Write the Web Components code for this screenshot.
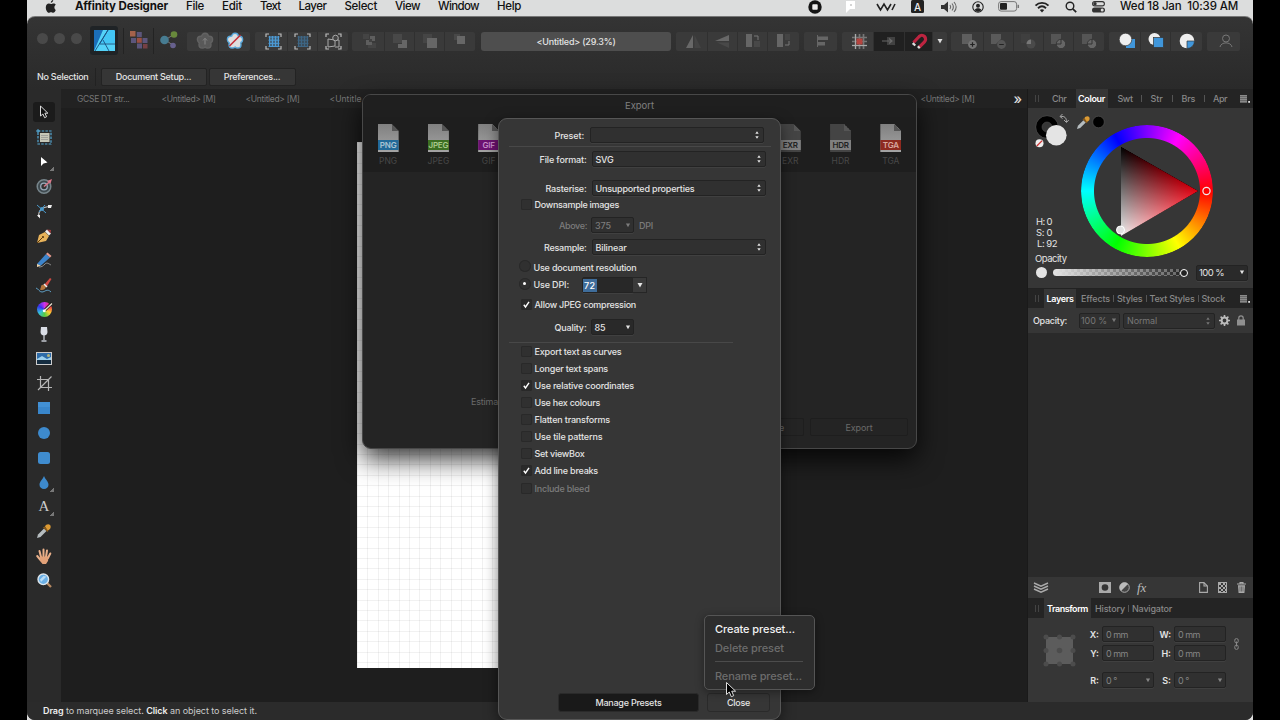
<!DOCTYPE html>
<html lang="en">
<head>
<meta charset="utf-8">
<title>Affinity Designer</title>
<style>
  body {
    margin: 0;
    width: 1280px;
    height: 720px;
    overflow: hidden;
    background: #000;
    font-family: Inter, "Liberation Sans", sans-serif;
    font-size: 9px;
    line-height: 1;
    color: #e4e4e4;
  }
</style>
</head>
<body>
<mac-desktop>
  <menu-bar slot="menu"></menu-bar>
  <app-window>
    <tool-bar slot="toolbar"></tool-bar>
    <context-bar slot="context"></context-bar>
    <tool-column slot="tools"></tool-column>
    <doc-area slot="document"></doc-area>
    <studio-panels slot="studio"></studio-panels>
    <status-bar slot="status"></status-bar>
  </app-window>
  <export-dialog slot="overlay"></export-dialog>
  <preset-sheet slot="overlay"></preset-sheet>
  <popup-menu slot="overlay">
    <ui-text w="80">Create preset...</ui-text>
    <ui-text w="69" class="off">Delete preset</ui-text>
    <hr>
    <ui-text w="87" class="off">Rename preset...</ui-text>
  </popup-menu>
  <mouse-pointer slot="overlay"></mouse-pointer>
</mac-desktop>

<script>
// name: [width, height, svg content]
const corners = '<path d="M1 4V1h3M13 1h3v3M16 13v3h-3M4 16H1v-3" fill="none" stroke="#bbb" stroke-width="1.2"/>';
const grid = c => `<rect x="4" y="3.500" width="10" height="10.500" fill="${c}" opacity=".45"/><path d="M4.500 3v11M7.500 3v11M10.500 3v11M13.500 3v11M3.500 4h11M3.500 7.200h11M3.500 10.400h11M3.500 13.500h11" stroke="${c}" stroke-width="1"/>`;
const flower = (f, s) => `<g fill="${f}" stroke="${s}" stroke-width="1.400"><circle cx="9" cy="4.500" r="3.300"/><circle cx="13.300" cy="7.600" r="3.300"/><circle cx="11.700" cy="12.700" r="3.300"/><circle cx="6.300" cy="12.700" r="3.300"/><circle cx="4.700" cy="7.600" r="3.300"/></g><circle cx="9" cy="9" r="5.500" fill="${f}"/>`;

const ICONS = {
  apple: [12, 14, '<path d="M8.200 0c.1 1.300-1 2.700-2.400 2.700C5.600 1.500 6.900.1 8.200 0zM10.800 9.900c-.6 1.400-1.500 2.800-2.600 2.800-.9 0-1.200-.5-2.200-.5s-1.400.5-2.200.5C2.300 12.700.8 9.900.8 7.400.8 5 2.300 3.600 3.900 3.600c.9 0 1.500.5 2.200.5.7 0 1.400-.6 2.500-.6.9 0 1.700.5 2.200 1.200-1.900 1.100-1.700 4.200 0 5.200z" fill="#222"/>'],
  record: [14, 14, '<circle cx="7" cy="7" r="6.700" fill="#151515"/><rect x="4.300" y="4.300" width="5.400" height="5.400" rx=".8" fill="#eee"/>'],
  flag: [12, 14, '<path d="M2 1h9v8H6l-4 4z" fill="#fff"/><rect x="6" y="4" width="2" height="2" fill="#d4d4d4"/>'],
  wave: [20, 10, '<path d="M1 2l3.500 6L8 2l3.500 6L15 2M16 8l3-6" fill="none" stroke="#222" stroke-width="1.600"/>'],
  inputA: [13, 13, '<rect width="13" height="13" rx="1.500" fill="#222"/>'],
  speaker: [16, 12, '<path d="M0 4h3l4-3.500v11L3 8H0z" fill="#333"/><path d="M9 4c1 1.300 1 2.700 0 4M11 2.500c1.800 2.300 1.800 4.700 0 7M13 1c2.600 3 2.600 7 0 10" fill="none" stroke="#666" stroke-width="1.100"/>'],
  user: [12, 12, '<circle cx="6" cy="6" r="5.200" fill="none" stroke="#222" stroke-width="1.100"/><circle cx="6" cy="4.700" r="2" fill="#222"/><path d="M2.600 9.200c1-2.600 5.800-2.600 6.800 0L6 11z" fill="#222"/>'],
  battery: [22, 11, '<rect x=".6" y=".6" width="18" height="9.500" rx="2.500" fill="none" stroke="#777"/><rect x="2" y="2" width="7" height="6.700" rx="1" fill="#222"/><path d="M20.300 3.800v3.200" stroke="#777" stroke-width="1.500"/>'],
  wifi: [16, 12, '<path d="M1.500 4.600c3.700-3.600 9.300-3.600 13 0M4 7.200c2.400-2.200 5.600-2.200 8 0" fill="none" stroke="#222" stroke-width="1.900"/><path d="M5.800 9c1.400-1.100 3-1.100 4.400 0L8 11.500z" fill="#222"/>'],
  search: [12, 12, '<circle cx="5" cy="5" r="3.800" fill="none" stroke="#222" stroke-width="1.400"/><path d="M7.800 7.800l3.400 3.400" stroke="#222" stroke-width="1.700"/>'],
  control: [13, 12, '<rect x=".6" y=".6" width="11.800" height="4.300" rx="2.150" fill="none" stroke="#333" stroke-width="1.100"/><circle cx="3" cy="2.700" r="1.700" fill="#333"/><rect y="6.400" width="13" height="5.200" rx="2.600" fill="#333"/><circle cx="10.200" cy="9" r="1.500" fill="#ddd"/>'],

  designer: [21, 21, '<rect width="21" height="21" rx="1" fill="#43c6f5"/><path d="M0 0h14L0 21z" fill="#1b6fba"/><path d="M9 0h5L6 13h15v8H0z" fill="#54d2f8"/><path d="M14 0L5.500 14H21M9 10l6 11M14 0L1 21" fill="none" stroke="#1a4f80" stroke-width=".9"/>'],
  pixel: [18, 18, '<rect width="5.500" height="5.500" fill="#a5624b"/><g fill="#5c567c"><rect x="6.800" y="1" width="5" height="5"/><rect x="1" y="7" width="5" height="5"/><rect x="12.500" y="7" width="5" height="5"/><rect x="7" y="12.500" width="5" height="5"/></g><rect x="6.800" y="6.800" width="5" height="5" fill="#9b5044"/><rect x="13" y="13" width="4.500" height="4.500" fill="#754044"/>'],
  share: [18, 18, '<path d="M5 9l8-5M5 9l8 5" stroke="#777"/><circle cx="4.500" cy="9" r="4.300" fill="#477c92"/><circle cx="14" cy="3.500" r="3.300" fill="#68893c"/><circle cx="13" cy="14.500" r="2.800" fill="#66608d"/>'],
  flowerUp: [18, 18, flower('#595959', '#626262') + '<path d="M9 12.500V7M7 8.500l2-2.300 2 2.300" stroke="#888" fill="none"/>'],
  flowerOff: [18, 18, flower('#dedede', '#58a8dc') + '<path d="M3.500 14L14.500 3" stroke="#c3303a" stroke-width="1.600"/>'],
  snapA: [17, 17, corners + grid('#4c9ad4')],
  snapB: [17, 17, corners + grid('#3e6685')],
  snapC: [17, 17, corners + '<path d="M3 6l7 1v6l-7 1zM10 7h4v7h-4" fill="none" stroke="#aaa"/><circle cx="10.500" cy="5" r="2.800" fill="#444" stroke="#aaa"/>'],
  boolA: [14, 14, '<path d="M0 0h6v5H0zM5 9h8v5H5z" fill="#444"/><path d="M7 2h5v5H9v4H3V6h4z" fill="#5e5e5e"/><rect x="6" y="5" width="3" height="3" fill="#414141"/>'],
  boolB: [14, 14, '<rect width="9" height="9" fill="#484848"/><path d="M9 6h5v8H5v-4h4z" fill="#666"/>'],
  boolC: [14, 14, '<rect width="9" height="9" fill="#454545"/><rect x="4" y="4" width="10" height="10" fill="#666"/>'],
  boolD: [14, 14, '<rect x="1" width="6" height="6" fill="#484848"/><rect x="4" y="2" width="8" height="8" fill="#676767"/>'],
  flipH: [15, 13, '<path d="M7 0v13H0z" fill="#686868"/><path d="M8.500 0v13H15z" fill="#444"/>'],
  flipV: [15, 13, '<path d="M14 0v6H0z" fill="#686868"/><path d="M14 7.500V13L2 7.500z" fill="#484848"/>'],
  rotL: [14, 14, '<rect width="6" height="13" fill="#666"/><rect x="8" y="7" width="6" height="6" fill="#484848"/><path d="M8 2h4v4" fill="none" stroke="#777"/>'],
  rotR: [14, 14, '<rect width="6" height="13" fill="#666"/><rect x="8" width="5" height="6" fill="#444"/><path d="M12 7v4H8" fill="none" stroke="#777"/>'],
  align: [12, 12, '<rect x="1" y="1.500" width="10" height="3.500" fill="#666"/><rect x="1" y="7" width="7" height="3.500" fill="#666"/><path d="M.5 0v12" stroke="#666"/>'],
  pixGrid: [15, 15, '<path d="M3.500 0v15M7.500 0v15M11.500 0v15M0 3.500h15M0 7.500h15M0 11.500h15" stroke="#777" stroke-width="1.700"/><rect x="4.500" y="4.500" width="6" height="6" fill="#b6443f"/><path d="M3.500 0v15M0 11.500h15" stroke="#aaa"/>'],
  nudge: [14, 10, '<rect x="5" y="1" width="8" height="8" fill="#414141"/><path d="M0 5h10M7 2.500L10 5 7 7.500" fill="none" stroke="#696969" stroke-width="1.200"/>'],
  magnet: [16, 16, '<path d="M2.500 9.500l5.700-6a3.700 3.700 0 0 1 5.300 5.300L8 14.300" fill="none" stroke="#bd2440" stroke-width="3.200"/><path d="M.9 11l1.600-1.700 2.500 2.500-1.400 1.500zM6 14l1.700-1.600 1.700 2-1.400 1.500z" fill="#ddd"/>'],
  down: [6, 5, '<path d="M.5 0h5L3 4.500z" fill="currentColor"/>'],
  geoA: [15, 15, '<rect width="10" height="10" fill="#5e5e5e"/><circle cx="10.500" cy="10.500" r="4.400" fill="#747474"/><path d="M10.500 8.200v4.600M8.200 10.500h4.600" stroke="#222" stroke-width="1.200"/>'],
  geoB: [15, 15, '<path d="M0 0h10v5L5 10H0z" fill="#5a5a5a"/><circle cx="10.500" cy="10.500" r="4.400" fill="#555"/><path d="M8.200 10.500h4.600" stroke="#222" stroke-width="1.200"/>'],
  geoC: [15, 15, '<rect width="9" height="9" fill="#3f3f3f"/><circle cx="10" cy="10" r="4.500" fill="#4a4a4a"/><path d="M10 5.500V10H5.500A4.500 4.500 0 0 1 10 5.500z" fill="#777"/>'],
  geoD: [15, 15, '<rect width="10" height="10" fill="#555"/><circle cx="10" cy="10" r="4.700" fill="#666" stroke="#383838"/><path d="M10 5.500V10h-4.500" fill="none" stroke="#333"/>'],
  ordA: [16, 16, '<rect x="7" y="6" width="9" height="9" fill="#4096da"/><circle cx="6.500" cy="6.500" r="6.300" fill="#eee" stroke="#333" stroke-width=".7"/>'],
  ordB: [16, 16, '<circle cx="6.500" cy="6" r="6" fill="#eee"/><rect x="5.500" y="4.500" width="10" height="10" fill="#4096da" stroke="#333" stroke-width=".7"/>'],
  ordC: [16, 16, '<circle cx="8" cy="8" r="7.300" fill="#eee"/><path d="M8 8h7.500A7.500 7.500 0 0 1 8 15.500z" fill="#4096da" stroke="#333" stroke-width=".7"/>'],
  person: [14, 14, '<circle cx="7" cy="4.500" r="3.500" fill="none" stroke="#777"/><path d="M1 13c1-5.500 11-5.500 12 0" fill="none" stroke="#777"/>'],

  arrow: [10, 14, '<path d="M1.500 1v10l2.400-2 1.700 3.700 2-1-1.700-3.500h3z" fill="#111" stroke="#ddd"/>'],
  artboard: [16, 16, '<rect x="2" y="2" width="13" height="13" fill="none" stroke="#55a9d5" stroke-width="1.200" stroke-dasharray="2.500 1.200"/><path d="M0 2h4M2 0v4" stroke="#55a9d5"/><rect x="4" y="4" width="9.500" height="9" fill="#c7c7b7"/><path d="M5 6.500h7M5 8.500h7M5 10.500h7" stroke="#888" stroke-width=".6"/>'],
  node: [8, 10, '<path d="M1 0v9l2.500-2.600L7.500 5.500z" fill="#fff"/>'],
  target: [17, 16, '<circle cx="8" cy="8.500" r="6.800" fill="#3f4a4f" stroke="#77858b" stroke-width="1.500"/><circle cx="8" cy="8.500" r="3.300" fill="#333" stroke="#9ab" stroke-width="1.300"/><path d="M8 8.500l6-5" stroke="#d9788a" stroke-width="1.500"/><path d="M11 3l5-2-1.500 4.500z" fill="#d9788a"/>'],
  corner: [16, 16, '<path d="M2.500 14c0-6 2-10 12-10.500" fill="none" stroke="#bbb" stroke-width="1.200"/><path d="M1 2l9 8M9 2L3 9" stroke="#4b9acb"/><circle cx="6" cy="6" r="2" fill="#4b9acb"/><path d="M12 2h4l-1 3h-3zM1 12h3v3.500z" fill="#eee"/>'],
  pen: [16, 16, '<path d="M1 15l2-8 6-3 4 4-3 5-9 2z" fill="#e7b25a"/><path d="M1 15l5.500-5.500" stroke="#5a3a10"/><circle cx="7" cy="9" r="1.100" fill="#5a3a10"/><path d="M9 3.500l2-2 4 4-2 2z" fill="#eee"/><path d="M11 1.500l4 .5-.5 3.500z" fill="#a33c3c"/>'],
  pencil: [16, 16, '<path d="M1 12l9-10 4 3.500-9 8-4 1z" fill="#3d84cb"/><path d="M10 2l1.500-1.600 4 3.500L14 5.500z" fill="#e59a8e"/><path d="M1 12l3.800 1.800L1 15z" fill="#f0d2a4"/><path d="M3 15c3 0 4-1 6-3s4 0 6 1" fill="none" stroke="#aaa" stroke-width=".8"/>'],
  brush: [16, 16, '<path d="M8 8l6-7 1.500 1-5 8z" fill="#cf4a43"/><path d="M5 10c0-3 3-3 5-.5-1 4-4 4-6 3z" fill="#b4763c"/><path d="M8 7l3 3" stroke="#eee" stroke-width="1.500"/><path d="M0 11c3 1 3 4 6 4s5-4 9 0" fill="none" stroke="#5e9ec4"/>'],
  glass: [8, 16, '<path d="M1 1h6l.5 5c0 2.500-1.800 3.500-3.500 3.500S.5 8.500.5 6z" fill="#dadde6"/><path d="M4 9v5M1.500 15h5" stroke="#c4c8d0" stroke-width="1.300"/>'],
  picture: [16, 13, '<rect x=".5" y=".5" width="15" height="12" fill="#2d6ba8" stroke="#ccc"/><path d="M1 7l5-3 5 3 4-2v3H1z" fill="#9cd0ee"/><rect x="1" y="8" width="14" height="4" fill="#142c40"/><circle cx="12.500" cy="3.500" r="1.500" fill="#b6b67a"/>'],
  crop: [15, 15, '<path d="M3.500 0v11.500H15M0 3.500h11.500V15M1 14L14.500.5" fill="none" stroke="#b5b5b5" stroke-width="1.200"/>'],
  square: [12, 12, '<rect width="12" height="12" fill="#3986cb"/><rect width="12" height="5" fill="#4a98da" opacity=".6"/>'],
  circle: [12, 12, '<circle cx="6" cy="6" r="6" fill="#3d8acd"/>'],
  rounded: [12, 12, '<rect width="12" height="12" rx="2.500" fill="#3f8ccf"/>'],
  drop: [10, 13, '<path d="M5 0c1 3 4.500 5.500 4.500 8.700a4.500 4.300 0 0 1-9 0C.5 5.500 4 3 5 0z" fill="#3d8acd"/>'],
  dropper: [14, 14, '<path d="M0 14l1-3.500 6-6L9.500 7l-6 6z" fill="#b5bcbf"/><path d="M6 3.500l1.500-1 4 4-1 1.500z" fill="#8a5a1a"/><path d="M8 2.500C9-.5 14-.5 13.700 3c0 2-1.700 3-3 3.200z" fill="#dc9a33"/>'],
  hand: [16, 16, '<g fill="none" stroke="#eab08a" stroke-width="2" stroke-linecap="round"><path d="M5 9L3.500 3M7.500 8.500V1.500M10 9l1-6.500M12 10l2.300-4.500M4.500 12L1.200 8"/></g><path d="M4 8.500h8.500L12 13l-2 3H6.500L4 13z" fill="#e3a279"/>'],
  magnify: [15, 15, '<path d="M9.500 9.500l4.500 4.500" stroke="#b88a62" stroke-width="2.300"/><circle cx="6.300" cy="6.300" r="5.300" fill="#6bb0e6" stroke="#dde6ec" stroke-width="1.400"/><path d="M3 6.500L6.500 3l3 .5L4 9z" fill="#b9dcf6"/>'],
  stroke: [16, 16, '<path d="M7.500 8.500L15 1" stroke="#1c1c1c" stroke-width="3"/><path d="M8 8l7-6.500" stroke="#e8e0d0" stroke-width="1.300"/><circle cx="7.300" cy="8.700" r="1.500" fill="#fff"/>'],
  tick: [7, 7, '<path d="M.8 3.800l1.700 2.200L6 .8" fill="none" stroke="#fff" stroke-width="1.400"/>'],
  updown: [4, 8, '<path d="M.3 2.700L2 .3l1.700 2.400zM.3 5.300h3.400L2 7.700z" fill="currentColor"/>'],
  menu: [10, 8, '<path d="M0 .8h7M0 2.800h7M0 4.800h7M0 6.800h7" stroke="#aaa" stroke-width="1.200"/><rect x="8.200" y="6" width="1.800" height="1.800" fill="#ddd"/>'],
  swatches: [76, 42, '<circle cx="19" cy="17" r="8" fill="none" stroke="#000" stroke-width="6"/><circle cx="19" cy="17" r="11.300" fill="none" stroke="#4b4b4b" stroke-width=".6"/><circle cx="19" cy="17" r="5" fill="none" stroke="#4b4b4b" stroke-width=".6"/><circle cx="28.300" cy="25.300" r="10.300" fill="#e4e4e4"/><circle cx="11.500" cy="33.300" r="4" fill="#eee"/><path d="M8.800 36l5.400-5.400" stroke="#c33" stroke-width="1.300"/><path d="M32.500 6.500c4-.5 6 1 6 5.500M34.500 4l-2.500 2.500 2.500 2M36 10l2.500 2.500 2.200-2.500" fill="none" stroke="#aaa"/><g transform="translate(49 6) scale(.92)"><path d="M0 14l1-3.500 6-6L9.500 7l-6 6z" fill="#b5bcbf"/><path d="M6 3.500l1.500-1 4 4-1 1.500z" fill="#8a5a1a"/><path d="M8 2.500C9-.5 14-.5 13.700 3c0 2-1.700 3-3 3.200z" fill="#dc9a33"/></g><circle cx="70.500" cy="12" r="5.800" fill="#000" stroke="#555" stroke-width=".6"/>'],
  gear: [11, 11, '<circle cx="5.500" cy="5.500" r="2.900" fill="none" stroke="#bbb" stroke-width="2"/><path d="M5.500 0v2M5.500 9v2M0 5.500h2M9 5.500h2M1.600 1.600L3 3M8 8l1.400 1.400M9.400 1.600L8 3M3 8L1.600 9.400" stroke="#bbb" stroke-width="1.600"/>'],
  lock: [8, 11, '<rect y="4.500" width="8" height="6" fill="#909090"/><path d="M1.800 5V3a2.200 2.200 0 0 1 4.400 0v2" fill="none" stroke="#909090" stroke-width="1.200"/>'],
  layers: [14, 11, '<path d="M0 1l7 3.200L14 1M0 4l7 3.200L14 4M0 7l7 3.200L14 7" fill="none" stroke="#aaa" stroke-width="1.500"/>'],
  mask: [12, 11, '<rect width="12" height="11" fill="#aaa"/><circle cx="6" cy="5.500" r="3.300" fill="#333"/>'],
  adjust: [11, 11, '<circle cx="5.500" cy="5.500" r="4.800" fill="#444" stroke="#aaa"/><path d="M9 2A4.800 4.800 0 0 0 2 9z" fill="#bbb"/>'],
  page: [9, 11, '<path d="M.6.6H5L8.400 4v6.400H.6zM5 .6V4h3.400" fill="none" stroke="#aaa" stroke-width="1.100"/>'],
  checker: [9, 11, '<rect x=".5" y=".5" width="8" height="10" fill="none" stroke="#aaa"/><path d="M1 2h8M1 6h8M1 10h8" stroke="#aaa" stroke-width="2" stroke-dasharray="2"/><path d="M3 4h6M3 8h6" stroke="#aaa" stroke-width="2" stroke-dasharray="2"/>'],
  trash: [9, 11, '<path d="M0 2h9M3 1.500V.6h3v.9" fill="none" stroke="#aaa" stroke-width="1.100"/><path d="M1 3.200h7L7.400 11H1.600z" fill="#aaa"/><path d="M3 4.500v5M4.500 4.500v5M6 4.500v5" stroke="#444" stroke-width=".6"/>'],
  anchor: [33, 33, '<rect x="3" y="3" width="27" height="27" fill="#5c5c5c"/><g fill="#4c4c4c"><circle cx="3" cy="3" r="2.500"/><circle cx="16.500" cy="3" r="2.500"/><circle cx="30" cy="3" r="2.500"/><circle cx="3" cy="16.500" r="2.500"/><circle cx="16.500" cy="16.500" r="2.800"/><circle cx="30" cy="16.500" r="2.500"/><circle cx="3" cy="30" r="2.500"/><circle cx="16.500" cy="30" r="2.500"/><circle cx="30" cy="30" r="2.500"/></g>'],
  chain: [5, 12, '<rect x=".8" y=".6" width="3.400" height="4.300" rx="1.500" fill="none" stroke="#888"/><rect x=".8" y="7.100" width="3.400" height="4.300" rx="1.500" fill="none" stroke="#888"/><path d="M2.500 3.500v5" stroke="#888"/>'],
  pointer: [12, 17, '<path d="M1.500 1.500v12l2.800-2.500 2 4.700 2.400-1-2-4.500h3.900z" fill="#000" stroke="#ddd" stroke-width="1"/>'],
};

class BaseElement extends HTMLElement {
  constructor() {
    super();
    this.root = this.attachShadow({ mode: "open" });
  }

  connectedCallback() {
    this.root.innerHTML = this.render();
  }
}

class UiIcon extends BaseElement {
  render() {
    const [w, h, body] = ICONS[this.getAttribute("name")];
    return `
      <style>
        :host { display: inline-flex; flex: none; width: ${w}px; height: ${h}px; }
        svg { display: block; overflow: visible; }
      </style>
      <svg width="${w}" height="${h}" viewBox="0 0 ${w} ${h}">${body}</svg>`;
  }
}

// One line of text, tracked so that it fills the width in "w"
class UiText extends BaseElement {
  connectedCallback() {
    super.connectedCallback();
    const want = parseFloat(this.getAttribute("w"));
    if (!want) return;
    const range = document.createRange();
    range.selectNodeContents(this);
    const got = range.getBoundingClientRect().width;
    this.style.letterSpacing = (want - got) / this.textContent.length + "px";
  }

  render() {
    return `<style>:host { display: inline-block; flex: none; white-space: nowrap; }</style><slot></slot>`;
  }
}

class MacDesktop extends BaseElement {
  render() {
    return `
      <style>
        :host {
          display: flex;
          flex-direction: column;
          position: relative;
          width: 1226px;
          height: 720px;
          margin-left: 27px;
          background: #dcdcdc;
        }
      </style>
      <slot name="menu"></slot>
      <slot></slot>
      <slot name="overlay"></slot>`;
  }
}

class MenuBar extends BaseElement {
  render() {
    return `
      <style>
        :host {
          display: flex;
          align-items: center;
          box-sizing: border-box;
          height: 16px;
          padding: 0 15px 3px 18px;
          background: #dcdddd;
          color: #111;
          font-size: 11.500px;
          font-weight: 500;
        }
        nav { display: flex; gap: 18px; margin-left: 18px; }
        b { font-weight: 700; }
        .tray { display: flex; align-items: center; margin-left: auto; }
        .a { display: grid; place-items: center; color: #eee; font-size: 10px; }
        .a > * { grid-area: 1 / 1; }
      </style>
      <ui-icon name="apple"></ui-icon>
      <nav>
        <b><ui-text w="93">Affinity Designer</ui-text></b>
        <ui-text w="18">File</ui-text><ui-text w="20">Edit</ui-text>
        <ui-text w="20.500">Text</ui-text><ui-text w="28">Layer</ui-text>
        <ui-text w="32.500">Select</ui-text><ui-text w="25">View</ui-text>
        <ui-text w="41">Window</ui-text><ui-text w="24">Help</ui-text>
      </nav>
      <div class="tray">
        <ui-icon name="record"></ui-icon>
        <ui-icon name="flag" style="margin-left:22px"></ui-icon>
        <ui-icon name="wave" style="margin-left:20px"></ui-icon>
        <span class="a" style="margin-left:15px"><ui-icon name="inputA"></ui-icon><span>A</span></span>
        <ui-icon name="speaker" style="margin-left:17px"></ui-icon>
        <ui-icon name="user" style="margin-left:15px"></ui-icon>
        <ui-icon name="battery" style="margin-left:14px"></ui-icon>
        <ui-icon name="wifi" style="margin-left:14px"></ui-icon>
        <ui-icon name="search" style="margin-left:15px"></ui-icon>
        <ui-icon name="control" style="margin-left:15px"></ui-icon>
        <ui-text w="118" style="margin-left:15px">Wed 18 Jan&nbsp; 10:39 AM</ui-text>
      </div>`;
  }
}

class AppWindow extends BaseElement {
  render() {
    return `
      <style>
        :host {
          display: grid;
          flex: 1;
          grid-template: 48px 24px 613px 18px / 34px 967px 225px;
          background: linear-gradient(#343434, #2a2a2a 72px);
          border-top: 1px solid #777;
          box-sizing: border-box;
          border-radius: 8px;
          overflow: hidden;
        }
        .wide { grid-column: 1 / -1; display: grid; }
        .cell { display: grid; }
      </style>
      <div class="wide"><slot name="toolbar"></slot></div>
      <div class="wide"><slot name="context"></slot></div>
      <div class="cell"><slot name="tools"></slot></div>
      <div class="cell"><slot name="document"></slot></div>
      <div class="cell"><slot name="studio"></slot></div>
      <div class="wide"><slot name="status"></slot></div>`;
  }
}

// Row of joined toolbar buttons, e.g. icons="flipH flipV" widths="32 30"
class ButtonGroup extends BaseElement {
  render() {
    const widths = this.getAttribute("widths").split(" ");
    const dark = (this.getAttribute("dark") || "").split(" ");
    const cells = this.getAttribute("icons").split(" ").map((name, i) => `
      <span style="width:${widths[i]}px" class="${dark.includes(name) ? "dark" : ""}">
        <ui-icon name="${name}"></ui-icon>
      </span>`).join("");
    return `
      <style>
        :host { display: flex; flex: none; height: 19px; background: #3a3a3a; border-radius: 2px; color: #ddd; }
        span {
          display: grid;
          place-items: center;
          box-sizing: border-box;
          border-right: 1px solid #303030;
        }
        span:first-of-type { padding-left: 4px; }
        span:last-child { border: 0; }
        .dark { background: #202020; }
      </style>${cells}`;
  }
}

class ToolBar extends BaseElement {
  render() {
    return `
      <style>
        :host { display: flex; align-items: center; padding-left: 10px; }
        i { width: 11px; height: 11px; border-radius: 50%; background: #494949; margin-right: 6px; margin-top: -5px; }
        .app { display: grid; place-items: center; width: 28px; height: 29px; margin: -2px 0 0 2px; background: #1f2326; border-radius: 3px; }
        .sep { width: 1px; height: 26px; background: #232323; }
        .title {
          display: grid;
          place-items: center;
          width: 190px;
          height: 19px;
          margin: 0 5px 0 6px;
          border-radius: 3px;
          background: #4e4e4e;
          font-weight: 500;
        }
      </style>
      <i></i><i></i><i></i>
      <span class="app"><ui-icon name="designer"></ui-icon></span>
      <span class="sep" style="margin:0 6px 0 5px"></span>
      <ui-icon name="pixel" style="margin-top:-2px"></ui-icon>
      <span class="sep" style="margin:0 6px 0 5px"></span>
      <ui-icon name="share" style="margin-top:-2px"></ui-icon>
      <button-group style="margin-left:9px" icons="flowerUp flowerOff" widths="32 31"></button-group>
      <button-group style="margin-left:5px" icons="snapA snapB snapC" widths="33 30 30"></button-group>
      <button-group style="margin-left:4px" icons="boolA boolB boolC boolD" widths="33 30 30 30"></button-group>
      <span class="title"><ui-text w="79">&lt;Untitled&gt; (29.3%)</ui-text></span>
      <button-group icons="flipH flipV rotL rotR" widths="32 30 30 31"></button-group>
      <button-group style="margin-left:5px" icons="align" widths="33"></button-group>
      <button-group style="margin-left:5px" icons="pixGrid nudge magnet down" dark="nudge magnet" widths="32 31 28 14"></button-group>
      <button-group style="margin-left:4px" icons="geoA geoB geoC geoD geoD" widths="33 30 30 30 30"></button-group>
      <button-group style="margin-left:5px" icons="ordA ordB ordC" widths="32 30 31"></button-group>
      <button-group style="margin-left:5px" icons="person" widths="33"></button-group>`;
  }
}

class ContextBar extends BaseElement {
  render() {
    return `
      <style>
        :host { display: flex; align-items: center; padding: 0 0 1px 10px; font-weight: 500; }
        .sep { width: 1px; height: 18px; margin: 0 5px 0 6px; background: #222; }
        button {
          all: unset;
          box-sizing: border-box;
          height: 18px;
          border: 1px solid #232323;
          border-radius: 2px;
          background: #363636;
          display: grid;
          place-items: center;
        }
      </style>
      <ui-text w="51.500">No Selection</ui-text>
      <span class="sep"></span>
      <button style="width:106px"><ui-text w="75.500">Document Setup...</ui-text></button>
      <button style="width:87px;margin-left:2px"><ui-text w="56.500">Preferences...</ui-text></button>`;
  }
}

class ToolColumn extends BaseElement {
  render() {
    const tools = ["arrow", "artboard", "node+", "target", "corner", "pen", "pencil", "brush", "wheel", "glass",
      "picture", "crop", "square", "circle", "rounded", "drop+", "text+", "dropper", "hand", "magnify"];
    const draw = name => {
      if (name === "wheel") return '<b class="wheel"><ui-icon name="stroke"></ui-icon></b>';
      if (name === "text") return '<b class="letter">A</b>';
      return `<ui-icon name="${name}"></ui-icon>`;
    };
    return `
      <style>
        :host { display: grid; grid-auto-rows: 24.670px; padding: 11px 1px 0 1px; background: #2a2a2a; align-content: start; }
        div { display: grid; place-items: center; position: relative; }
        div:first-of-type ui-icon { padding: 3px 6px; background: #1b1b1b; border-radius: 3px; }
        .more::after {
          content: "";
          position: absolute;
          right: 6px;
          bottom: 3px;
          width: 4px;
          height: 4px;
          background: linear-gradient(135deg, transparent 50%, #777 50%);
        }
        .wheel {
          width: 15px;
          height: 15px;
          border-radius: 50%;
          background: conic-gradient(from 60deg, #e34, #fc3, #5c4, #3bd, #33e, #c3e, #e34);
        }
        .letter { font: 400 15px "Liberation Serif", serif; color: #ccc; }
      </style>
      ${tools.map(t => `<div class="${t.endsWith("+") ? "more" : ""}">${draw(t.replace("+", ""))}</div>`).join("")}`;
  }
}

class DocArea extends BaseElement {
  render() {
    return `
      <style>
        :host { display: grid; grid-template-rows: 19px 1fr; background: #1e1e1e; border-right: 1px solid #1a1a1a; }
        header { display: flex; align-items: center; padding: 1px 5px 0 16px; background: #222; color: #777; font-size: 8.500px; }
        header ui-text { margin-right: 30px; }
        main { padding: 34px 0 0 296px; }
        .page {
          width: 372px;
          height: 526px;
          background:
            repeating-linear-gradient(90deg, #0000000e 0 1px, transparent 1px 10.400px),
            repeating-linear-gradient(#0000000e 0 1px, transparent 1px 10.400px), #fff;
        }
      </style>
      <header>
        <ui-text w="52.500" style="margin-right:32px">GCSE DT str...</ui-text>
        <ui-text w="54">&lt;Untitled&gt; [M]</ui-text>
        <ui-text w="54">&lt;Untitled&gt; [M]</ui-text>
        <ui-text w="32">&lt;Untitle</ui-text>
        <ui-text w="54" style="margin:0 0 0 auto">&lt;Untitled&gt; [M]</ui-text>
        <b style="margin-left:39px;color:#ddd;font-size:14px;font-weight:500;line-height:12px">»</b>
      </header>
      <main><div class="page"></div></main>`;
  }
}

// Tab strip of a studio panel; the slotted <b> is the active tab
class PanelTabs extends BaseElement {
  render() {
    return `
      <style>
        :host {
          display: flex;
          align-items: center;
          box-sizing: border-box;
          height: 19px;
          padding: 0 3px 0 7px;
          background: #242424;
          color: #888;
          font-weight: 500;
        }
        .grip { width: 2px; height: 7px; border: solid #444; border-width: 0 1px; margin-right: 5px; }
        ::slotted(b) { display: grid; place-items: center; align-self: stretch; background: #363636; color: #fff; font-weight: 600; }
        ::slotted(i) { width: 1px; height: 7px; background: #555; }
        ui-icon { margin-left: auto; }
      </style>
      <span class="grip"></span><slot></slot>${this.hasAttribute("plain") ? "" : '<ui-icon name="menu"></ui-icon>'}`;
  }
}

// Sunken value box; kind="updown" or kind="down" adds the arrows
class ValueBox extends BaseElement {
  render() {
    const kind = this.getAttribute("kind");
    return `
      <style>
        :host {
          display: inline-flex;
          flex: none;
          align-items: center;
          justify-content: space-between;
          box-sizing: border-box;
          height: 16px;
          padding: 0 4px 0 3px;
          border: 1px solid #232323;
          border-radius: 2px;
          background: var(--box, #303030);
          box-shadow: 0 1px 0 #404040;
        }
        .down { transform: scale(.85); margin-right: -2px; }
      </style>
      <span><slot></slot></span>${kind ? `<ui-icon name="${kind}" class="${kind}"></ui-icon>` : ""}`;
  }
}

class ColourWheel extends BaseElement {
  render() {
    return `
      <style>
        :host { display: block; flex: none; position: relative; width: 132px; height: 132px; }
        .ring {
          width: 132px;
          height: 132px;
          border-radius: 50%;
          background: conic-gradient(from 90deg, #f00, #ff0, #0f0, #0ff, #00f, #f0f, #f00);
          mask: radial-gradient(circle, transparent 52.500px, #000 53.500px);
        }
        svg { position: absolute; inset: 0; isolation: isolate; }
      </style>
      <div class="ring"></div>
      <svg width="132" height="132">
        <defs>
          <linearGradient id="hue"><stop stop-color="#000"/><stop offset="1" stop-color="#e30010"/></linearGradient>
          <linearGradient id="white" gradientUnits="userSpaceOnUse" x1="40" y1="22" x2="1.700" y2="89.100">
            <stop stop-color="#000"/><stop offset="1" stop-color="#eee"/>
          </linearGradient>
        </defs>
        <path d="M40 22l77 44-77 45z" fill="url(#hue)"/>
        <path d="M40 22l77 44-77 45z" fill="url(#white)" style="mix-blend-mode:plus-lighter"/>
        <circle cx="125.500" cy="66" r="3.600" fill="none" stroke="#eee" stroke-width="1.200"/>
        <circle cx="39.500" cy="105" r="4" fill="#e2e2e2" stroke="#fff"/>
      </svg>`;
  }
}

class ColourPanel extends BaseElement {
  render() {
    return `
      <style>
        :host { display: block; height: 180px; background: #363636; font-size: 9.500px; }
        .top { display: flex; height: 145px; }
        .left { display: flex; flex-direction: column; flex: none; width: 53px; height: 145px; }
        .hsl { display: grid; gap: 1.500px; margin: 65px 0 0 8px; }
        .slider { display: flex; align-items: center; padding: 0 0 1px 8px; height: 18px; }
        .dot { width: 11px; height: 11px; border-radius: 50%; background: #e4e4e4; }
        .track {
          width: 131px;
          height: 7px;
          margin-left: 6px;
          border-radius: 4px;
          background:
            linear-gradient(90deg, #e4e4e4, #2220),
            conic-gradient(#666 25%, #222 0 50%, #666 0 75%, #222 0) 0 0 / 6px 6px;
          display: flex;
          align-items: center;
          justify-content: flex-end;
        }
        .knob { width: 6px; height: 6px; border: 1.500px solid #fff; background: #222; border-radius: 50%; margin-right: -4px; }
      </style>
      <div class="top">
        <div class="left">
          <ui-icon name="swatches" style="margin-top:2px"></ui-icon>
          <div class="hsl">
            <ui-text w="16">H: 0</ui-text><ui-text w="16">S: 0</ui-text><ui-text w="20" style="padding-left:1px">L: 92</ui-text>
          </div>
        </div>
        <colour-wheel style="margin-top:17px"></colour-wheel>
      </div>
      <div style="padding:1px 0 0 7px"><ui-text w="31.500">Opacity</ui-text></div>
      <div class="slider">
        <span class="dot"></span>
        <span class="track"><span class="knob"></span></span>
        <value-box kind="down" style="width:52px;margin-left:12px;padding-left:2px;--box:#2a2a2a"><ui-text w="25">100 %</ui-text></value-box>
      </div>`;
  }
}

class TransformPanel extends BaseElement {
  render() {
    const box = (label, value, kind, cls = "") => `
      <b class="${cls}">${label}:</b>
      <value-box class="${cls}" ${kind}><ui-text w="${kind ? 11 : 22}">${value}</ui-text></value-box>`;
    return `
      <style>
        :host { display: flex; flex: 1; align-items: flex-start; padding: 8px 0 0 15px; background: #363636; color: #858585; }
        .fields { display: grid; grid-template-columns: 9px 52px 14px 52px; gap: 3px; margin-left: 14px; }
        b { display: flex; align-items: center; justify-content: flex-end; color: #e4e4e4; font-weight: 600; white-space: nowrap; }
        .gap { margin-top: 8px; }
      </style>
      <ui-icon name="anchor" style="margin-top:8px"></ui-icon>
      <div class="fields">
        ${box("X", "0 mm", "")}${box("W", "0 mm", "")}
        ${box("Y", "0 mm", "")}${box("H", "0 mm", "")}
        ${box("R", "0 °", 'kind="down"', "gap")}${box("S", "0 °", 'kind="down"', "gap")}
      </div>
      <ui-icon name="chain" style="margin:12px 0 0 8px"></ui-icon>`;
  }
}

class StudioPanels extends BaseElement {
  render() {
    return `
      <style>
        :host { display: flex; flex-direction: column; min-width: 0; }
        .opacity { display: flex; align-items: center; height: 25px; padding-left: 5px; background: #363636; }
        .list { height: 244px; background: #2a2a2a; }
        .foot { display: flex; align-items: center; height: 21px; padding: 0 7px 0 6px; background: #363636; }
        em { font: italic 13px "Liberation Serif", serif; color: #bbb; line-height: 10px; }
      </style>
      <panel-tabs>
        <ui-text w="14.500" style="margin:0 9px 0 8px">Chr</ui-text>
        <b style="width:32px"><ui-text w="27">Colour</ui-text></b>
        <ui-text w="15" style="margin:0 8px 0 10px">Swt</ui-text><i></i>
        <ui-text w="12" style="margin:0 9px">Str</ui-text><i></i>
        <ui-text w="13.500" style="margin:0 9px">Brs</ui-text><i></i>
        <ui-text w="14" style="margin-left:8px">Apr</ui-text>
      </panel-tabs>
      <colour-panel></colour-panel>
      <panel-tabs style="border-top:1px solid #222;height:20px">
        <b style="width:32px"><ui-text w="27">Layers</ui-text></b>
        <ui-text w="29" style="margin:0 3px 0 5px">Effects</ui-text><i></i>
        <ui-text w="25.500" style="margin:0 3px">Styles</ui-text><i></i>
        <ui-text w="45" style="margin:0 3px">Text Styles</ui-text><i></i>
        <ui-text w="23.500" style="margin-left:3px">Stock</ui-text>
      </panel-tabs>
      <div class="opacity">
        <ui-text w="34" style="font-weight:500">Opacity:</ui-text>
        <value-box kind="down" style="width:41px;margin:0 3px 0 12px;padding-left:1px;color:#777"><ui-text w="26">100 %</ui-text></value-box>
        <value-box kind="updown" style="width:92px;color:#777"><ui-text w="30">Normal</ui-text></value-box>
        <ui-icon name="gear" style="margin:0 7px 0 4px"></ui-icon>
        <ui-icon name="lock"></ui-icon>
      </div>
      <div class="list"></div>
      <div class="foot">
        <ui-icon name="layers"></ui-icon>
        <ui-icon name="mask" style="margin-left:51px"></ui-icon>
        <ui-icon name="adjust" style="margin:0 7px 0 8px"></ui-icon>
        <em>fx</em>
        <ui-icon name="page" style="margin-left:auto"></ui-icon>
        <ui-icon name="checker" style="margin:0 10px"></ui-icon>
        <ui-icon name="trash"></ui-icon>
      </div>
      <panel-tabs plain style="height:20px">
        <b style="width:47px"><ui-text w="41">Transform</ui-text></b>
        <ui-text w="30" style="margin:0 3px 0 4px">History</ui-text><i></i>
        <ui-text w="40" style="margin-left:3px">Navigator</ui-text>
      </panel-tabs>
      <transform-panel></transform-panel>`;
  }
}

class StatusBar extends BaseElement {
  render() {
    return `
      <style>
        :host { display: flex; align-items: center; padding: 0 0 1px 16px; background: #2b2b2b; color: #ccc; }
        b { font-weight: 600; color: #eee; }
      </style>
      <ui-text w="214"><b>Drag</b> to marquee select. <b>Click</b> an object to select it.</ui-text>`;
  }
}

class FileType extends BaseElement {
  render() {
    return `
      <style>
        :host { display: grid; justify-items: center; width: 50.300px; color: #484848; }
        .sheet {
          display: flex;
          flex-direction: column;
          justify-content: flex-end;
          box-sizing: border-box;
          width: 21px;
          height: 28px;
          padding-bottom: 2px;
          background:
            linear-gradient(45deg, #555 50%, transparent 50%) 14px 0 / 7px 7px no-repeat,
            var(--paper, linear-gradient(#808080, #a4a4a4));
          clip-path: polygon(0 0, 14px 0, 100% 7px, 100% 100%, 0 100%);
        }
        .sheet b { height: 10px; line-height: 10px; text-align: center; font-size: 8px; font-weight: 600; background: var(--tag); color: var(--ink, #a9c4d4); letter-spacing: -.2px; }
        small { font-size: 8.500px; margin-top: 5px; }
      </style>
      <span class="sheet"><b><slot></slot></b></span>
      <small>${this.textContent}</small>`;
  }
}

class ExportDialog extends BaseElement {
  render() {
    return `
      <style>
        :host {
          position: absolute;
          left: 335px;
          top: 94px;
          box-sizing: border-box;
          width: 555px;
          height: 355px;
          display: flex;
          flex-direction: column;
          border: 1px solid #484848;
          border-radius: 9px;
          background: #242424;
          box-shadow: 0 10px 26px rgba(0, 0, 0, .8);
          overflow: hidden;
        }
        header { flex: none; height: 22px; display: grid; place-items: center; background: #1f1f1f; color: #808080; font-size: 9.500px; }
        .types { display: flex; flex: none; align-items: flex-start; height: 55px; box-sizing: border-box; padding-top: 7px; background: #1e1e1e; }
        .gap { width: 251.500px; }
        .estimate { margin: 225px 0 0 108px; color: #6a6a6a; }
        .buttons { display: flex; justify-content: flex-end; gap: 6px; margin: 12px 8px 0; color: #6a6a6a; }
        .buttons span { display: grid; align-items: center; box-sizing: border-box; height: 18px; border: 1px solid #1e1e1e; border-radius: 2px; }
      </style>
      <header><ui-text w="29">Export</ui-text></header>
      <div class="types">
        <file-type style="--tag:#226a99">PNG</file-type>
        <file-type style="--tag:#3c6f22;--ink:#a9c98c">JPEG</file-type>
        <file-type style="--tag:#6e1272;--ink:#c98fca">GIF</file-type>
        <span class="gap"></span>
        <file-type style="--tag:#808080;--ink:#222;--paper:#444">EXR</file-type>
        <file-type style="--tag:#808080;--ink:#222;--paper:#444">HDR</file-type>
        <file-type style="--tag:#8e2a20;--ink:#d8a8a0">TGA</file-type>
      </div>
      <div class="estimate"><ui-text w="27">Estima</ui-text></div>
      <div class="buttons">
        <span style="width:98px;padding-left:72px">e</span>
        <span style="width:98px;justify-content:center"><ui-text w="27">Export</ui-text></span>
      </div>`;
  }
}

class CheckRow extends BaseElement {
  render() {
    const on = this.hasAttribute("checked");
    const radio = this.hasAttribute("radio");
    return `
      <style>
        :host { display: flex; flex: none; align-items: center; gap: 3px; height: 17px; padding-left: 21.500px; }
        .box {
          display: grid;
          place-items: center;
          flex: none;
          width: 11px;
          height: 11px;
          border-radius: 2px;
          background: ${on ? "#2a2a2a" : "#303030"};
          box-shadow: inset 0 0 0 1px #292929;
        }
        .radio { width: 12px; height: 12px; border-radius: 50%; margin: -3px 0 0 -2px; background: #303030; }
        .radio i { width: 3px; height: 3px; border-radius: 50%; background: #fff; }
      </style>
      <span class="box ${radio ? "radio" : ""}">${on ? (radio ? "<i></i>" : '<ui-icon name="tick"></ui-icon>') : ""}</span>
      <slot></slot>`;
  }
}

class PresetSheet extends BaseElement {
  render() {
    return `
      <style>
        :host {
          position: absolute;
          left: 471px;
          top: 118px;
          box-sizing: border-box;
          width: 283px;
          height: 602px;
          display: flex;
          flex-direction: column;
          border: 1px solid #565656;
          border-radius: 9px;
          background: #363636;
          box-shadow: 0 4px 14px rgba(0, 0, 0, .5);
          font-weight: 500;
        }
        .row { display: flex; align-items: center; height: 22px; flex: none; }
        .row label { width: 87.500px; text-align: right; margin-right: 5px; }
        .row.wide label { width: 85px; margin-right: 6px; }
        hr { flex: none; width: 262px; height: 1px; margin: 0 0 0 10px; border: 0; background: #484848; }
        .dim { color: #7c7c7c; }
        mark { background: #3f6d9b; color: #fff; padding: 1px; }
        footer { display: flex; margin: auto 0 7px 59px; }
        footer span { display: grid; place-items: center; box-sizing: border-box; height: 19px; border-radius: 3px; border: 1px solid #2a2a2a; }
        .drop { display: grid; place-items: center; width: 13px; height: 14px; margin-left: -5px; border: 1px solid #262626; background: #3a3a3a; }
      </style>
      <div class="row wide" style="margin-top:5px">
        <label><ui-text w="29.500">Preset:</ui-text></label>
        <value-box kind="updown" style="width:174px"></value-box>
      </div>
      <hr>
      <div class="row" style="margin-top:1px">
        <label><ui-text w="47">File format:</ui-text></label>
        <value-box kind="updown" style="width:174px"><ui-text w="18">SVG</ui-text></value-box>
      </div>
      <div class="row" style="margin-top:7px">
        <label><ui-text w="41">Rasterise:</ui-text></label>
        <value-box kind="updown" style="width:174px"><ui-text w="99">Unsupported properties</ui-text></value-box>
      </div>
      <check-row style="height:10px"><ui-text w="84.500">Downsample images</ui-text></check-row>
      <div class="row dim" style="margin-top:5px">
        <label style="width:88px;margin-right:4px"><ui-text w="28">Above:</ui-text></label>
        <value-box kind="down" style="width:43px"><ui-text w="16">375</ui-text></value-box>
        <ui-text w="14" style="margin-left:5px">DPI</ui-text>
      </div>
      <div class="row">
        <label><ui-text w="42.500">Resample:</ui-text></label>
        <value-box kind="updown" style="width:174px"><ui-text w="31">Bilinear</ui-text></value-box>
      </div>
      <check-row radio style="margin-top:1px"><ui-text w="103">Use document resolution</ui-text></check-row>
      <check-row radio checked style="height:18px">
        <ui-text w="35.500" style="margin-top:-1px">Use DPI:</ui-text>
        <value-box style="width:52px;margin-left:10px;padding-left:0;--box:#282828"><mark><ui-text w="11.500">72</ui-text></mark></value-box>
        <span class="drop"><ui-icon name="down"></ui-icon></span>
      </check-row>
      <check-row checked style="margin-top:2px"><ui-text w="101.500">Allow JPEG compression</ui-text></check-row>
      <div class="row" style="margin-top:3px">
        <label style="margin-right:4px"><ui-text w="32" style="margin-top:-2px">Quality:</ui-text></label>
        <value-box kind="down" style="width:43px;--box:#292929"><ui-text w="11">85</ui-text></value-box>
      </div>
      <hr style="width:224px;margin:4px 0 0 10px">
      <check-row><ui-text w="87">Export text as curves</ui-text></check-row>
      <check-row><ui-text w="73.500">Longer text spans</ui-text></check-row>
      <check-row checked><ui-text w="99.500">Use relative coordinates</ui-text></check-row>
      <check-row><ui-text w="65.500">Use hex colours</ui-text></check-row>
      <check-row><ui-text w="75.500">Flatten transforms</ui-text></check-row>
      <check-row><ui-text w="68">Use tile patterns</ui-text></check-row>
      <check-row><ui-text w="50">Set viewBox</ui-text></check-row>
      <check-row checked><ui-text w="63.500">Add line breaks</ui-text></check-row>
      <check-row class="dim" style="margin-top:1px"><ui-text w="55">Include bleed</ui-text></check-row>
      <footer>
        <span style="width:141px;background:#191919"><ui-text w="66">Manage Presets</ui-text></span>
        <span style="width:63px;margin-left:8px"><ui-text w="23">Close</ui-text></span>
      </footer>`;
  }
}

class PopupMenu extends BaseElement {
  render() {
    return `
      <style>
        :host {
          position: absolute;
          left: 677px;
          top: 615px;
          box-sizing: border-box;
          width: 111px;
          height: 75px;
          padding: 4px 11px 0 10px;
          display: flex;
          flex-direction: column;
          align-items: flex-start;
          border: 1px solid #555;
          border-radius: 5px;
          background: #2d2d2d;
          box-shadow: 0 2px 8px rgba(0, 0, 0, .4);
          color: #f2f2f2;
          font-size: 11px;
          font-weight: 500;
          line-height: 19px;
        }
        ::slotted(.off) { color: #6c6c6c; }
        ::slotted(hr) { width: 100%; height: 1px; margin: 3px 0 5px; border: 0; background: #4c4c4c; flex: none; }
      </style>
      <slot></slot>`;
  }
}

class MousePointer extends BaseElement {
  render() {
    return `
      <style>:host { position: absolute; left: 698px; top: 681px; }</style>
      <ui-icon name="pointer"></ui-icon>`;
  }
}

customElements.define("mac-desktop", MacDesktop);
customElements.define("menu-bar", MenuBar);
customElements.define("app-window", AppWindow);
customElements.define("button-group", ButtonGroup);
customElements.define("tool-bar", ToolBar);
customElements.define("context-bar", ContextBar);
customElements.define("tool-column", ToolColumn);
customElements.define("doc-area", DocArea);
customElements.define("panel-tabs", PanelTabs);
customElements.define("value-box", ValueBox);
customElements.define("colour-wheel", ColourWheel);
customElements.define("colour-panel", ColourPanel);
customElements.define("transform-panel", TransformPanel);
customElements.define("studio-panels", StudioPanels);
customElements.define("status-bar", StatusBar);
customElements.define("file-type", FileType);
customElements.define("export-dialog", ExportDialog);
customElements.define("check-row", CheckRow);
customElements.define("preset-sheet", PresetSheet);
customElements.define("popup-menu", PopupMenu);
customElements.define("mouse-pointer", MousePointer);
customElements.define("ui-icon", UiIcon);
// last, so that every parent has its fonts when the text is measured
customElements.define("ui-text", UiText);
</script>
</body>
</html>
